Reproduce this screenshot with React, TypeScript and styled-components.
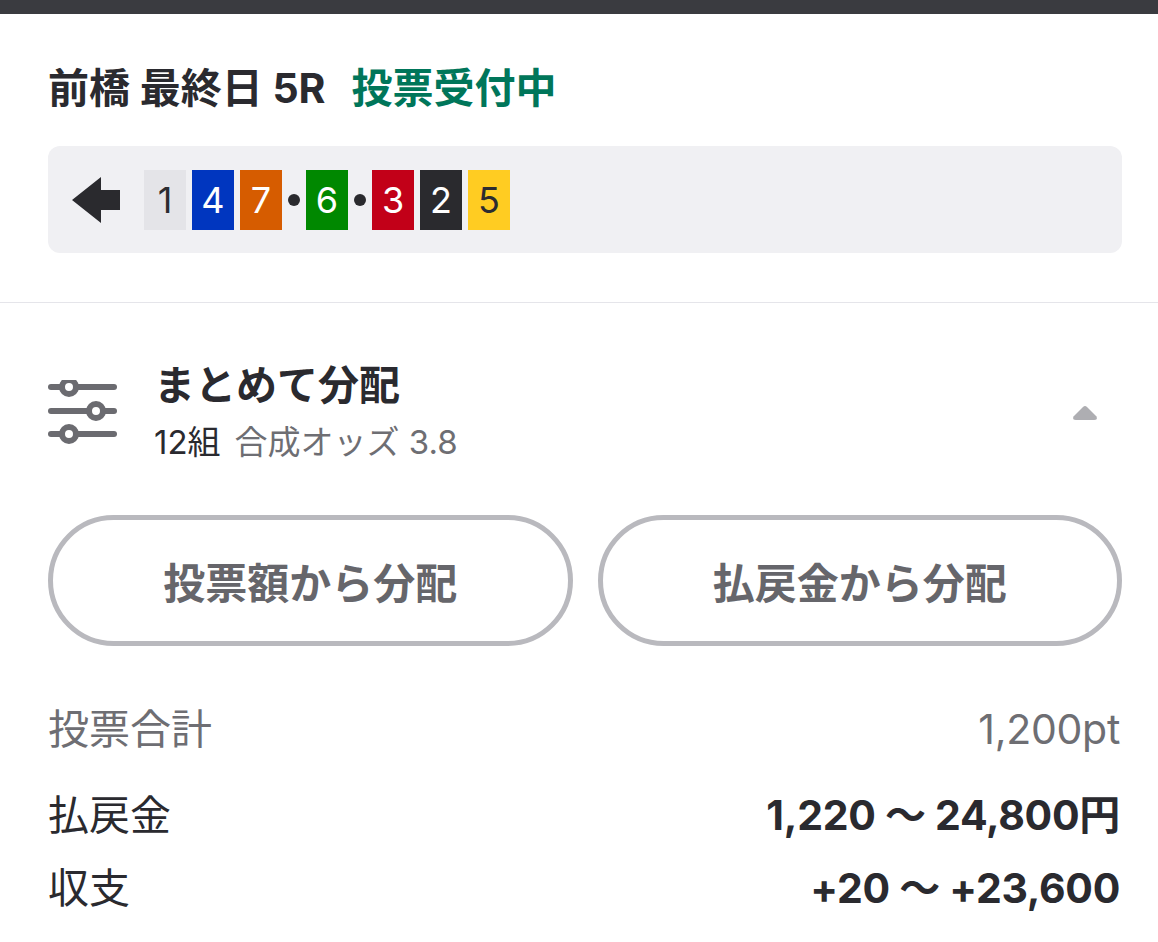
import styled, { createGlobalStyle } from "styled-components";

const GlobalStyle = createGlobalStyle`
  html, body {
    margin: 0;
    padding: 0;
    background: #ffffff;
  }
  body {
    font-family: "Inter", "Noto Sans CJK JP", sans-serif;
    color: #2a2a2f;
  }
`;

const TopBar = styled.div`
  height: 14px;
  background: #3a3b40;
`;

const Section = styled.section`
  padding: 50px 36px 49px 48px;
`;

const RaceTitle = styled.h1`
  margin: 0;
  font-size: 41px;
  line-height: 48px;
  font-weight: 700;
  display: flex;
  align-items: center;
  gap: 26px;
`;

const Status = styled.span`
  color: #00765a;
`;

const BetBox = styled.div`
  margin-top: 34px;
  background: #f0f0f3;
  border-radius: 12px;
  padding: 24px 24px 23px 24px;
  display: flex;
  align-items: center;
  gap: 6px;
`;

const ArrowWrap = styled.div`
  width: 48px;
  height: 60px;
  display: flex;
  align-items: center;
  margin-right: 18px;
`;

const NumBox = styled.div<{ $bg: string; $fg: string }>`
  width: 42px;
  height: 60px;
  background: ${(p) => p.$bg};
  color: ${(p) => p.$fg};
  font-size: 36px;
  line-height: 60px;
  text-align: center;
  font-weight: 400;
`;

const Dot = styled.span`
  width: 12px;
  height: 12px;
  border-radius: 50%;
  background: #2a2a2e;
`;

const Divider = styled.hr`
  margin: 0;
  border: none;
  height: 1px;
  background: #e5e5ea;
`;

const Header = styled.div`
  display: flex;
  align-items: center;
  padding-top: 58px;
`;

const HeaderText = styled.div`
  flex: 1;
  margin-left: 36px;
`;

const HeaderTitle = styled.div`
  font-size: 41px;
  line-height: 48px;
  font-weight: 700;
`;

const HeaderSub = styled.div`
  margin-top: 12px;
  font-size: 33px;
  line-height: 42px;
  color: #6e6e73;
  display: flex;
  gap: 14px;
`;

const Count = styled.span`
  color: #2a2a2f;
`;

const Caret = styled.div`
  width: 26px;
  margin-right: 24px;
  display: flex;
`;

const ButtonRow = styled.div`
  margin-top: 52px;
  display: grid;
  grid-template-columns: 1fr 1fr;
  gap: 25px;
`;

const Pill = styled.button`
  height: 131px;
  border: 5px solid #b9b9be;
  border-radius: 66px;
  background: #fff;
  color: #66666b;
  font-family: inherit;
  font-size: 42px;
  font-weight: 700;
  padding: 0;
`;

const Summary = styled.div`
  margin-top: 59px;
  padding-right: 2px;
`;

const Row = styled.div<{ $gap: number; $muted?: boolean }>`
  display: flex;
  justify-content: space-between;
  align-items: center;
  margin-top: ${(p) => p.$gap}px;
  font-size: 41px;
  line-height: 48px;
  color: ${(p) => (p.$muted ? "#6e6e73" : "#2a2a2f")};
`;

const Value = styled.span<{ $bold?: boolean }>`
  font-weight: ${(p) => (p.$bold ? 700 : 400)};
  letter-spacing: -0.3px;
`;

const Arrow = () => (
  <svg width="48" height="46" viewBox="0 0 48 46">
    <path d="M0 23 L29 0 V13 H48 V33 H29 V46 Z" fill="#2a2a2e" />
  </svg>
);

const FilterIcon = () => (
  <svg width="70" height="64" viewBox="0 0 70 64">
    <g stroke="#6b6b70" strokeWidth="6" strokeLinecap="round" fill="#fff">
      <line x1="3" y1="7" x2="66" y2="7" />
      <line x1="3" y1="31" x2="66" y2="31" />
      <line x1="3" y1="54" x2="66" y2="54" />
      <circle cx="21" cy="7" r="7" />
      <circle cx="48" cy="31" r="7" />
      <circle cx="21" cy="54" r="7" />
    </g>
  </svg>
);

const CaretUp = () => (
  <svg width="26" height="15" viewBox="0 0 26 15">
    <path
      d="M11 2 Q13 0 15 2 L24.5 11.5 Q26 15 22 15 H4 Q0 15 1.5 11.5 Z"
      fill="#aeaeb2"
    />
  </svg>
);

type Cell = { n: number; bg: string; fg: string } | "dot";

const cells: Cell[] = [
  { n: 1, bg: "#e4e4e8", fg: "#2c2c30" },
  { n: 4, bg: "#0036bf", fg: "#ffffff" },
  { n: 7, bg: "#d65c00", fg: "#ffffff" },
  "dot",
  { n: 6, bg: "#008800", fg: "#ffffff" },
  "dot",
  { n: 3, bg: "#c20018", fg: "#ffffff" },
  { n: 2, bg: "#2a2a2e", fg: "#ffffff" },
  { n: 5, bg: "#ffcc22", fg: "#2c2c30" },
];

const App: React.FC = () => {
  return (
    <>
      <GlobalStyle />
      <TopBar />
      <Section>
        <RaceTitle>
          <span>前橋 最終日 5R</span>
          <Status>投票受付中</Status>
        </RaceTitle>
        <BetBox>
          <ArrowWrap>
            <Arrow />
          </ArrowWrap>
          {cells.map((c, i) =>
            c === "dot" ? (
              <Dot key={i} />
            ) : (
              <NumBox key={i} $bg={c.bg} $fg={c.fg}>
                {c.n}
              </NumBox>
            )
          )}
        </BetBox>
      </Section>
      <Divider />
      <Section style={{ paddingTop: 0 }}>
        <Header>
          <FilterIcon />
          <HeaderText>
            <HeaderTitle>まとめて分配</HeaderTitle>
            <HeaderSub>
              <Count>12組</Count>
              <span>合成オッズ 3.8</span>
            </HeaderSub>
          </HeaderText>
          <Caret>
            <CaretUp />
          </Caret>
        </Header>
        <ButtonRow>
          <Pill>投票額から分配</Pill>
          <Pill>払戻金から分配</Pill>
        </ButtonRow>
        <Summary>
          <Row $gap={0} $muted>
            <span>投票合計</span>
            <Value>1,200pt</Value>
          </Row>
          <Row $gap={38}>
            <span>払戻金</span>
            <Value $bold>1,220 〜 24,800円</Value>
          </Row>
          <Row $gap={25}>
            <span>収支</span>
            <Value $bold>+20 〜 +23,600</Value>
          </Row>
        </Summary>
      </Section>
    </>
  );
};

export default App;
